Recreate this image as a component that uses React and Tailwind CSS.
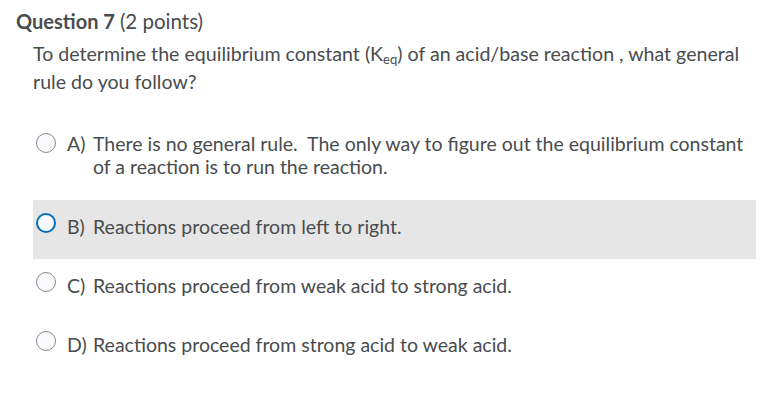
const options = [
  { id: "A", text: "There is no general rule.  The only way to figure out the equilibrium constant of a reaction is to run the reaction." },
  { id: "B", text: "Reactions proceed from left to right.", focused: true },
  { id: "C", text: "Reactions proceed from weak acid to strong acid." },
  { id: "D", text: "Reactions proceed from strong acid to weak acid." },
];

function Radio({ focused, multi }) {
  return (
    <span
      className={`h-[20px] w-[20px] shrink-0 rounded-full bg-[#f9fafb] ${
        multi ? "mt-[1px]" : "mb-[7px]"
      } ${focused ? "border-2 border-[#006fbf]" : "border border-[#868a8e]"}`}
    />
  );
}

export default function App() {
  return (
    <div
      className="h-[401px] w-[782px] bg-white text-[#494c4e]"
      style={{ fontFamily: "Lato, 'Open Sans', sans-serif" }}
    >
      <h2 className="pl-[16px] pt-[8px] text-[20px] leading-[26px]">
        <span className="font-bold">Question 7</span>
        <span className="ml-[5px] text-[20.5px]">(2 points)</span>
      </h2>
      <p className="ml-[33px] mt-[6px] w-[723px] text-[19.6px] leading-[28px]">
        To determine the equilibrium constant (K<sub className="text-[13px]">eq</sub>) of an acid/base reaction , what general rule do you follow?
      </p>
      <div className="ml-[33px] mt-[30px] w-[723px]">
        {options.map((o) => {
          const multi = o.id === "A";
          return (
            <div
              key={o.id}
              className={`flex gap-[11px] px-[3px] ${
                multi ? "items-start pb-[6px] pt-[6px]" : "h-[59px] items-center pb-[6px]"
              } ${o.focused ? "mt-[16px] bg-[#e6e6e6]" : ""}`}
            >
              <Radio focused={o.focused} multi={multi} />
              <div className="flex text-[19.5px] leading-[23px]">
                <span className="w-[26px] shrink-0">{o.id})</span>
                <span className="whitespace-pre-wrap">{o.text}</span>
              </div>
            </div>
          );
        })}
      </div>
    </div>
  );
}
